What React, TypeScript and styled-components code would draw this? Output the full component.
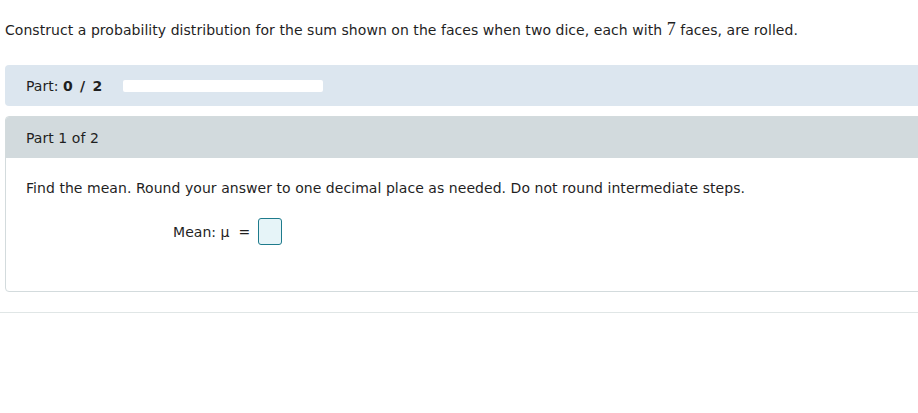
import React from 'react'
import styled, {createGlobalStyle} from 'styled-components'

const GlobalStyle = createGlobalStyle`
  html, body {
    margin: 0;
    padding: 0;
    background: #fff;
    overflow: hidden;
  }

  body {
    font-family: "DejaVu Sans", Verdana, sans-serif;
    font-size: 14px;
    letter-spacing: 0.05px;
    color: #1f1f1f;
  }
`

const Page = styled.div`
  width: 918px;
  overflow: hidden;
`

const Question = styled.p`
  margin: 0;
  padding: 20px 0 0 5px;
  height: 65px;
  box-sizing: border-box;
  line-height: 18px;
`

const MathNum = styled.span`
  font-family: "Liberation Serif", "DejaVu Serif", serif;
  font-size: 18px;
`

const ProgressBar = styled.div`
  margin-left: 5px;
  width: 923px;
  height: 41px;
  background: #dce6ef;
  border-radius: 4px;
  display: flex;
  align-items: center;
  padding-left: 21px;
  box-sizing: border-box;
`

const PartLabel = styled.span`
  width: 97px;

  b {
    font-weight: bold;
    letter-spacing: 1.2px;
  }
`

const Track = styled.div`
  width: 200px;
  height: 12px;
  background: #fff;
  border-radius: 2px;
`

const Card = styled.section`
  margin: 10px 0 0 5px;
  width: 923px;
  border: 1px solid #d3dbdd;
  border-radius: 4px;
  overflow: hidden;
`

const CardHeader = styled.div`
  height: 41px;
  background: #d2dadd;
  display: flex;
  align-items: center;
  padding-left: 20px;
`

const CardBody = styled.div`
  padding: 22px 20px 46px;
`

const Instruction = styled.p`
  margin: 0;
  line-height: 16px;
`

const AnswerRow = styled.div`
  display: flex;
  align-items: center;
  margin: 22px 0 0 147px;
  gap: 8px;
`

const AnswerBox = styled.div`
  width: 22px;
  height: 25px;
  background: #e6f4f8;
  border: 1px solid #1e7b8c;
  border-radius: 3px;
`

const Divider = styled.hr`
  margin: 20px 0 0;
  border: 0;
  border-top: 1px solid #e0e6e6;
`

export default function App() {
    return (
        <Page>
            <GlobalStyle/>
            <Question>
                Construct a probability distribution for the sum shown on the faces when two dice, each with <MathNum>7</MathNum> faces, are rolled.
            </Question>
            <ProgressBar>
                <PartLabel>Part: <b>0 / 2</b></PartLabel>
                <Track/>
            </ProgressBar>
            <Card>
                <CardHeader>Part 1 of 2</CardHeader>
                <CardBody>
                    <Instruction>Find the mean. Round your answer to one decimal place as needed. Do not round intermediate steps.</Instruction>
                    <AnswerRow>
                        <span>Mean: μ&nbsp;&nbsp;=</span>
                        <AnswerBox/>
                    </AnswerRow>
                </CardBody>
            </Card>
            <Divider/>
        </Page>
    )
}
